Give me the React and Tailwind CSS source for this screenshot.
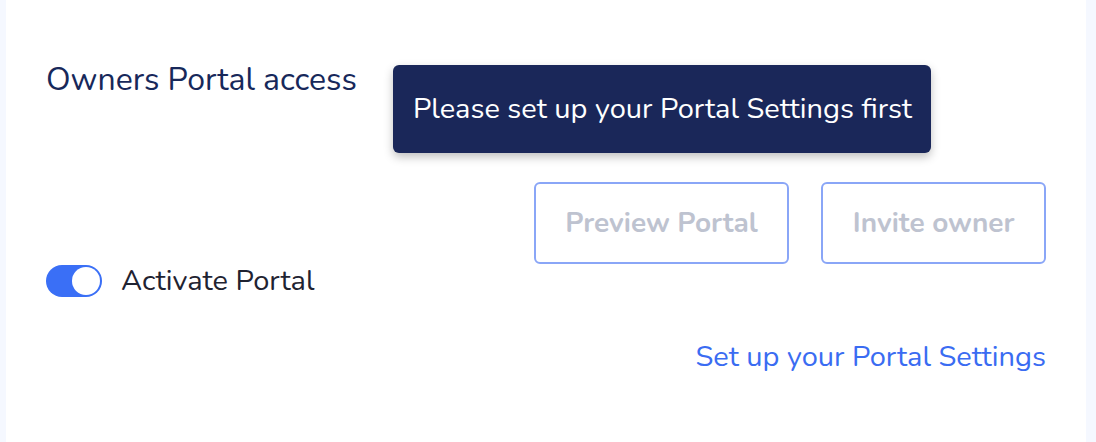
import React from 'react';

const font = { fontFamily: '"Nunito", "Lato", "Open Sans", sans-serif' };

const Toggle = ({ on }) => (
    <div className={`w-[56px] h-[32px] rounded-full p-[2px] flex ${on ? 'bg-[#3a6ff6] justify-end' : 'bg-gray-300 justify-start'}`}>
        <div className="w-[28px] h-[28px] rounded-full bg-white" />
    </div>
);

const App = () => {
    return (
        <div className="w-[1096px] h-[442px] bg-[#f5f8ff] pl-[6px] pr-[10px]" style={font}>
            <div className="h-full bg-white pl-[40px] pr-[40px] pt-[62px]">
                <div className="flex items-start">
                    <h3 className="text-[32px] leading-[36px] text-[#17285a]">Owners Portal access</h3>
                    <div className="relative">
                        <div className="absolute left-[36px] top-[3px] whitespace-nowrap bg-[#1a2759] text-white text-[29px] leading-[36px] rounded-[6px] pl-[20px] pr-[19px] py-[26px] shadow-[0_4px_10px_rgba(0,0,0,0.25)]">
                            Please set up your Portal Settings first
                        </div>
                    </div>
                </div>

                <div className="flex justify-end gap-[32px] mt-[84px]">
                    <button disabled className="h-[82px] px-[29.5px] border-2 border-[#8aa6f7] rounded-[6px] text-[28px] font-bold text-[#bec3d0]">
                        Preview Portal
                    </button>
                    <button disabled className="h-[82px] px-[29.5px] border-2 border-[#8aa6f7] rounded-[6px] text-[28px] font-bold text-[#bec3d0]">
                        Invite owner
                    </button>
                </div>

                <div className="flex items-center gap-[19px] -mt-[1px]">
                    <Toggle on />
                    <span className="text-[29px] leading-[36px] text-[#1f2331]">Activate Portal</span>
                </div>

                <div className="flex justify-end mt-[40px]">
                    <a className="text-[29px] leading-[36px] text-[#3a6cf2] cursor-pointer">Set up your Portal Settings</a>
                </div>
            </div>
        </div>
    );
};

export default App;
